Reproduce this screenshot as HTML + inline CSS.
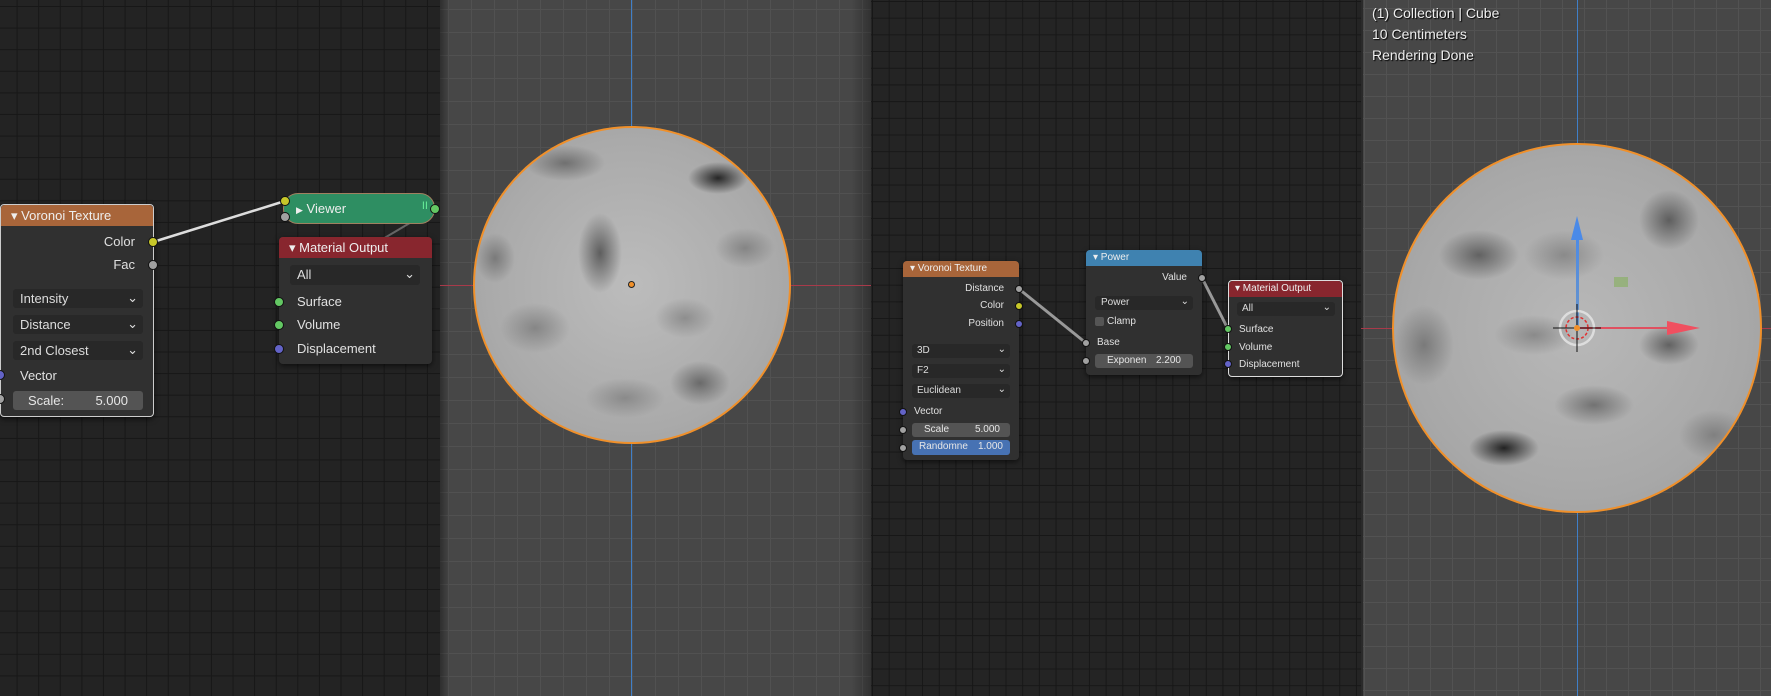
<!DOCTYPE html>
<html><head><meta charset="utf-8"><style>
*{margin:0;padding:0;box-sizing:border-box}
body{width:1771px;height:696px;overflow:hidden;position:relative;font-family:"Liberation Sans","DejaVu Sans",sans-serif;background:#1d1d1d}
.ed{position:absolute;top:0;height:696px}
.abs{position:absolute}
.node{position:absolute;background:#303030;border-radius:4px;box-shadow:0 2px 6px rgba(0,0,0,.6);color:#e0e0e0}
.hdr{position:absolute;left:0;right:0;top:0;border-radius:4px 4px 0 0;color:#eee}
.t{position:absolute;white-space:nowrap}
.dd{position:absolute;background:#282828;border-radius:3px;color:#ddd}
.fld{position:absolute;background:#545454;border-radius:3px;color:#e6e6e6}
.s{position:absolute;border-radius:50%;border:1px solid #111}
</style></head><body>
<!-- editor 1 -->
<div class="ed" style="left:0;width:440px;background-color:#232323;background-image:linear-gradient(#171717 1px,transparent 1px),linear-gradient(90deg,#171717 1px,transparent 1px);background-size:21.6px 21.6px;background-position:-5px 6px"></div>
<!-- viewport 1 -->
<div class="ed" style="left:440px;width:431px;background-color:#474747;background-image:linear-gradient(#515151 1px,transparent 1px),linear-gradient(90deg,#515151 1px,transparent 1px);background-size:23px 23px;background-position:8px 9px"></div>
<div class="ed" style="left:440px;width:10px;background:linear-gradient(90deg,rgba(0,0,0,.35),transparent)"></div>
<div class="ed" style="left:851px;width:20px;background:linear-gradient(90deg,transparent,rgba(0,0,0,.3))"></div>
<div class="abs" style="left:631px;top:0;width:1px;height:696px;background:#3f7fc8"></div>
<div class="abs" style="left:440px;top:285px;width:431px;height:1px;background:#a83a4a"></div>
<div class="abs" style="left:473px;top:126px;width:318px;height:318px;border-radius:50%;border:2px solid #f0902a;background:
radial-gradient(ellipse 30px 16px at 243px 50px,#262626,transparent),
radial-gradient(ellipse 22px 40px at 125px 125px,#5e5e5e,transparent),
radial-gradient(ellipse 30px 22px at 225px 255px,#6a6a6a,transparent),
radial-gradient(ellipse 40px 18px at 90px 35px,#707070,transparent),
radial-gradient(ellipse 20px 25px at 20px 130px,#7a7a7a,transparent),
radial-gradient(ellipse 35px 25px at 60px 200px,#868686,transparent),
radial-gradient(ellipse 30px 20px at 270px 120px,#858585,transparent),
radial-gradient(ellipse 40px 20px at 150px 270px,#8a8a8a,transparent),
radial-gradient(ellipse 30px 20px at 210px 190px,#8e8e8e,transparent),
radial-gradient(circle at 50% 50%,#bcbcbc 0%,#aaaaaa 65%,#9a9a9a 100%)"></div>
<div class="abs" style="left:628px;top:281px;width:7px;height:7px;border-radius:50%;background:#f0902a;border:1px solid #222"></div>
<!-- editor 2 -->
<div class="ed" style="left:871px;width:490px;background-color:#242424;background-image:linear-gradient(#171717 1px,transparent 1px),linear-gradient(90deg,#171717 1px,transparent 1px);background-size:16.7px 16.7px;background-position:1px 1px"></div>
<!-- viewport 2 -->
<div class="ed" style="left:1361px;width:410px;background-color:#474747;background-image:linear-gradient(#525252 1px,transparent 1px),linear-gradient(90deg,#525252 1px,transparent 1px);background-size:22px 22px;background-position:3px 8px"></div>
<div class="abs" style="left:1361px;top:0;width:2px;height:696px;background:#2a2a2a"></div>
<div class="abs" style="left:1577px;top:0;width:1px;height:696px;background:#3f7fc8"></div>
<div class="abs" style="left:1361px;top:328px;width:410px;height:1px;background:#a83a4a"></div>
<div class="abs" style="left:1392px;top:143px;width:370px;height:370px;border-radius:50%;border:2px solid #f0902a;background:
radial-gradient(ellipse 35px 18px at 110px 303px,#222,transparent),
radial-gradient(ellipse 30px 30px at 275px 75px,#5e5e5e,transparent),
radial-gradient(ellipse 40px 25px at 85px 110px,#626262,transparent),
radial-gradient(ellipse 30px 20px at 275px 200px,#626262,transparent),
radial-gradient(ellipse 40px 20px at 200px 260px,#727272,transparent),
radial-gradient(ellipse 30px 40px at 30px 200px,#7a7a7a,transparent),
radial-gradient(ellipse 40px 25px at 170px 110px,#8a8a8a,transparent),
radial-gradient(ellipse 35px 25px at 320px 290px,#808080,transparent),
radial-gradient(ellipse 40px 20px at 140px 190px,#8a8a8a,transparent),
radial-gradient(circle at 50% 50%,#b8b8b8 0%,#a8a8a8 65%,#9a9a9a 100%)"></div>
<div class="abs" style="left:1614px;top:277px;width:14px;height:10px;background:#90b070;opacity:.8"></div>
<div class="abs" style="left:1576px;top:230px;width:3px;height:96px;background:linear-gradient(#4a8ae8,#6a94c8)"></div>
<svg class="abs" style="left:1360px;top:200px" width="411" height="160">
<polygon points="217,16 211,40 223,40" fill="#4a8ae8"/>
<line x1="217" y1="128" x2="315" y2="128" stroke="#e05060" stroke-width="2"/>
<polygon points="340,128 307,121 307,135" fill="#f05060"/>
<circle cx="217" cy="128" r="17" fill="none" stroke="#ddd" stroke-width="2.5"/>
<circle cx="217" cy="128" r="11" fill="none" stroke="#e03030" stroke-width="1.5" stroke-dasharray="3 2"/>
<line x1="193" y1="128" x2="241" y2="128" stroke="#111" stroke-width="1"/>
<line x1="217" y1="104" x2="217" y2="152" stroke="#111" stroke-width="1"/>
<circle cx="217" cy="128" r="3" fill="#f0902a"/>
</svg>
<div class="t" style="left:1372px;top:3px;color:#eee;font-size:14px;line-height:21px;text-shadow:1px 1px 1px #000">(1) Collection | Cube<br>10 Centimeters<br>Rendering Done</div>

<!-- links -->
<svg class="abs" style="left:0;top:0" width="1771" height="696">
<line x1="153" y1="242" x2="285" y2="201" stroke="#ddd" stroke-width="2.5"/>
<line x1="280" y1="300" x2="430" y2="211" stroke="#666" stroke-width="2"/>
<line x1="1019" y1="289" x2="1086" y2="343" stroke="#999" stroke-width="3"/>
<line x1="1202" y1="278" x2="1228" y2="329" stroke="#999" stroke-width="3"/>
</svg>

<!-- Voronoi 1 -->
<div class="node" style="left:0;top:204px;width:154px;height:213px;border:1px solid #ccc;font-size:13px">
<div class="hdr" style="height:21px;background:#a8653a"><span class="t" style="left:10px;top:3px">▾ Voronoi Texture</span></div>
<span class="t" style="right:18px;top:29px">Color</span>
<span class="t" style="right:18px;top:52px">Fac</span>
<div class="dd" style="left:12px;top:84px;width:130px;height:19px"><span class="t" style="left:7px;top:2px">Intensity</span><span class="t" style="right:5px;top:1px">⌄</span></div>
<div class="dd" style="left:12px;top:110px;width:130px;height:19px"><span class="t" style="left:7px;top:2px">Distance</span><span class="t" style="right:5px;top:1px">⌄</span></div>
<div class="dd" style="left:12px;top:136px;width:130px;height:19px"><span class="t" style="left:7px;top:2px">2nd Closest</span><span class="t" style="right:5px;top:1px">⌄</span></div>
<span class="t" style="left:19px;top:163px">Vector</span>
<div class="fld" style="left:12px;top:186px;width:130px;height:19px"><span class="t" style="left:15px;top:2px">Scale:</span><span class="t" style="right:15px;top:2px">5.000</span></div>
</div>
<div class="s" style="left:148px;top:237px;width:10px;height:10px;background:#c7c729"></div>
<div class="s" style="left:148px;top:260px;width:10px;height:10px;background:#a1a1a1"></div>
<div class="s" style="left:-5px;top:370px;width:10px;height:10px;background:#6363c7"></div>
<div class="s" style="left:-5px;top:394px;width:10px;height:10px;background:#a1a1a1"></div>

<!-- Viewer -->
<div class="abs" style="left:283px;top:193px;width:152px;height:31px;border-radius:15px;background:#2e8e62;border:1px solid #a08060;color:#eee;font-size:13px"><span class="t" style="left:12px;top:7px"><span style="font-size:9px">▶</span> Viewer</span><span class="t" style="right:6px;top:6px;color:#6e9;font-size:11px">II</span></div>
<div class="s" style="left:280px;top:196px;width:10px;height:10px;background:#c7c729"></div>
<div class="s" style="left:280px;top:212px;width:10px;height:10px;background:#a1a1a1"></div>
<div class="s" style="left:430px;top:204px;width:10px;height:10px;background:#63c763"></div>

<!-- Material Output 1 -->
<div class="node" style="left:279px;top:237px;width:153px;height:127px;font-size:13px">
<div class="hdr" style="height:21px;background:#88262e"><span class="t" style="left:10px;top:3px">▾ Material Output</span></div>
<div class="dd" style="left:11px;top:28px;width:130px;height:20px"><span class="t" style="left:7px;top:2px">All</span><span class="t" style="right:5px;top:1px">⌄</span></div>
<span class="t" style="left:18px;top:57px">Surface</span>
<span class="t" style="left:18px;top:80px">Volume</span>
<span class="t" style="left:18px;top:104px">Displacement</span>
</div>
<div class="s" style="left:274px;top:297px;width:10px;height:10px;background:#63c763"></div>
<div class="s" style="left:274px;top:320px;width:10px;height:10px;background:#63c763"></div>
<div class="s" style="left:274px;top:344px;width:10px;height:10px;background:#6363c7"></div>

<!-- Voronoi 2 -->
<div class="node" style="left:903px;top:261px;width:116px;height:199px;font-size:10px">
<div class="hdr" style="height:16px;background:#a8653a"><span class="t" style="left:7px;top:2px">▾ Voronoi Texture</span></div>
<span class="t" style="right:15px;top:22px">Distance</span>
<span class="t" style="right:15px;top:39px">Color</span>
<span class="t" style="right:15px;top:57px">Position</span>
<div class="dd" style="left:9px;top:83px;width:98px;height:14px"><span class="t" style="left:5px;top:1px">3D</span><span class="t" style="right:4px;top:0">⌄</span></div>
<div class="dd" style="left:9px;top:103px;width:98px;height:14px"><span class="t" style="left:5px;top:1px">F2</span><span class="t" style="right:4px;top:0">⌄</span></div>
<div class="dd" style="left:9px;top:123px;width:98px;height:14px"><span class="t" style="left:5px;top:1px">Euclidean</span><span class="t" style="right:4px;top:0">⌄</span></div>
<span class="t" style="left:11px;top:145px">Vector</span>
<div class="fld" style="left:9px;top:162px;width:98px;height:14px"><span class="t" style="left:12px;top:1px">Scale</span><span class="t" style="right:10px;top:1px">5.000</span></div>
<div class="fld" style="left:9px;top:179px;width:98px;height:15px;background:#4772b3"><span class="t" style="left:7px;top:1px">Randomne</span><span class="t" style="right:7px;top:1px">1.000</span></div>
</div>
<div class="s" style="left:1015px;top:285px;width:8px;height:8px;background:#a1a1a1"></div>
<div class="s" style="left:1015px;top:302px;width:8px;height:8px;background:#c7c729"></div>
<div class="s" style="left:1015px;top:320px;width:8px;height:8px;background:#6363c7"></div>
<div class="s" style="left:899px;top:408px;width:8px;height:8px;background:#6363c7"></div>
<div class="s" style="left:899px;top:426px;width:8px;height:8px;background:#a1a1a1"></div>
<div class="s" style="left:899px;top:444px;width:8px;height:8px;background:#a1a1a1"></div>

<!-- Power -->
<div class="node" style="left:1086px;top:250px;width:116px;height:125px;font-size:10px">
<div class="hdr" style="height:16px;background:#3f82b0"><span class="t" style="left:7px;top:2px">▾ Power</span></div>
<span class="t" style="right:15px;top:22px">Value</span>
<div class="dd" style="left:9px;top:46px;width:98px;height:14px"><span class="t" style="left:6px;top:1px">Power</span><span class="t" style="right:4px;top:0">⌄</span></div>
<div class="abs" style="left:9px;top:67px;width:9px;height:9px;background:#555;border-radius:2px"></div>
<span class="t" style="left:21px;top:66px">Clamp</span>
<span class="t" style="left:11px;top:87px">Base</span>
<div class="fld" style="left:9px;top:104px;width:98px;height:14px"><span class="t" style="left:12px;top:1px">Exponen</span><span class="t" style="right:12px;top:1px">2.200</span></div>
</div>
<div class="s" style="left:1198px;top:274px;width:8px;height:8px;background:#a1a1a1"></div>
<div class="s" style="left:1082px;top:339px;width:8px;height:8px;background:#a1a1a1"></div>
<div class="s" style="left:1082px;top:357px;width:8px;height:8px;background:#a1a1a1"></div>

<!-- Material Output 2 -->
<div class="node" style="left:1228px;top:280px;width:115px;height:97px;border:1px solid #ddd;font-size:10px">
<div class="hdr" style="height:16px;background:#88262e"><span class="t" style="left:6px;top:2px">▾ Material Output</span></div>
<div class="dd" style="left:8px;top:21px;width:98px;height:14px"><span class="t" style="left:5px;top:1px">All</span><span class="t" style="right:4px;top:0">⌄</span></div>
<span class="t" style="left:10px;top:43px">Surface</span>
<span class="t" style="left:10px;top:61px">Volume</span>
<span class="t" style="left:10px;top:78px">Displacement</span>
</div>
<div class="s" style="left:1224px;top:325px;width:8px;height:8px;background:#63c763"></div>
<div class="s" style="left:1224px;top:343px;width:8px;height:8px;background:#63c763"></div>
<div class="s" style="left:1224px;top:360px;width:8px;height:8px;background:#6363c7"></div>
</body></html>
